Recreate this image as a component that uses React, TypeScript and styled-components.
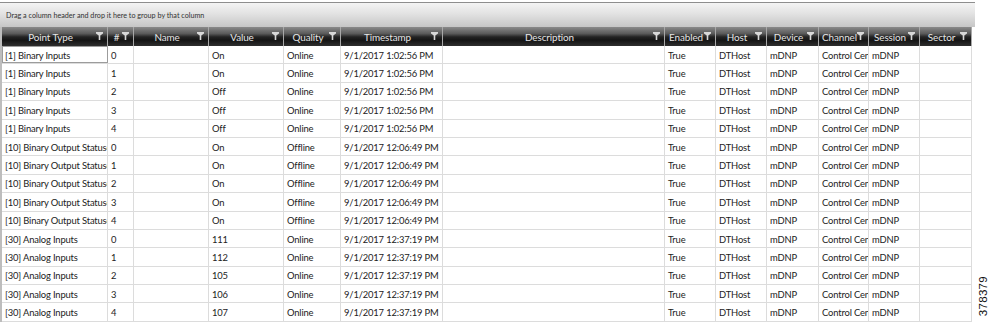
import React from 'react'
import styled, { createGlobalStyle } from 'styled-components'

const GlobalStyle = createGlobalStyle`
  html, body {
    margin: 0;
    padding: 0;
    background: #ffffff;
  }
  body {
    font-family: Lato, 'Noto Sans', sans-serif;
  }
`

type Column = { title: string; width: number }

const columns: Column[] = [
  { title: 'Point Type', width: 108 },
  { title: '#', width: 26 },
  { title: 'Name', width: 75 },
  { title: 'Value', width: 75 },
  { title: 'Quality', width: 57 },
  { title: 'Timestamp', width: 102 },
  { title: 'Description', width: 222 },
  { title: 'Enabled', width: 51 },
  { title: 'Host', width: 51 },
  { title: 'Device', width: 52 },
  { title: 'Channel', width: 50 },
  { title: 'Session', width: 51 },
  { title: 'Sector', width: 52 },
]

const makeRows = () => {
  const rows: string[][] = []
  const online = '9/1/2017 1:02:56 PM'
  const offline = '9/1/2017 12:06:49 PM'
  const analog = '9/1/2017 12:37:19 PM'
  const binVals = ['On', 'On', 'Off', 'Off', 'Off']
  for (let i = 0; i < 5; i++)
    rows.push(['[1] Binary Inputs', String(i), '', binVals[i], 'Online', online, '', 'True', 'DTHost', 'mDNP', 'Control Center', 'mDNP', ''])
  for (let i = 0; i < 5; i++)
    rows.push(['[10] Binary Output Statuses', String(i), '', 'On', 'Offline', offline, '', 'True', 'DTHost', 'mDNP', 'Control Center', 'mDNP', ''])
  const anVals = ['111', '112', '105', '106', '107']
  for (let i = 0; i < 5; i++)
    rows.push(['[30] Analog Inputs', String(i), '', anVals[i], 'Online', analog, '', 'True', 'DTHost', 'mDNP', 'Control Center', 'mDNP', ''])
  return rows
}

const rows = makeRows()

const Page = styled.div`
  display: flex;
  width: 991px;
  height: 326px;
  overflow: hidden;
`

const Grid = styled.div`
  display: flex;
  flex-direction: column;
  width: 975px;
  padding-top: 2px;
`

const GroupPanel = styled.div`
  display: flex;
  align-items: center;
  height: 24px;
  padding-left: 6px;
  border-top: 1px solid #8e8e8e;
  background: linear-gradient(#f4f4f4 0%, #e2e2e2 45%, #c6c6c6 100%);
  font-size: 7.2px;
  color: #333;
`

const Table = styled.div`
  display: flex;
  flex-direction: column;
  width: 972px;
  border-left: 2px solid #bdbdbd;
  box-sizing: border-box;
`

const HeaderRow = styled.div`
  display: flex;
  height: 19px;
  background: linear-gradient(#8a8a8a 0%, #5a5a5a 35%, #242424 52%, #141414 70%, #2e2e2e 100%);
`

const HeaderCell = styled.div<{ $w: number }>`
  position: relative;
  display: flex;
  align-items: center;
  justify-content: center;
  width: ${p => p.$w}px;
  flex: none;
  box-sizing: border-box;
  border-right: 1px solid #a8a8a8;
  padding: 1px 10px 0 2px;
  font-size: 9.9px;
  letter-spacing: -0.1px;
  color: #e6e6e6;
  white-space: nowrap;
  overflow: hidden;
`

const FilterIcon = styled.svg`
  position: absolute;
  right: 4px;
  top: 5px;
  width: 7px;
  height: 8px;
`

const Row = styled.div`
  display: flex;
  height: 18.4px;
  box-sizing: border-box;
  border-bottom: 1px solid #dcdcdc;
`

const Cell = styled.div<{ $w: number; $current?: boolean }>`
  display: flex;
  align-items: center;
  width: ${p => p.$w}px;
  flex: none;
  box-sizing: border-box;
  padding: 1px 0 0 3px;
  border-right: 1px solid #dcdcdc;
  font-size: 9.4px;
  letter-spacing: -0.15px;
  color: #222;
  white-space: nowrap;
  overflow: hidden;
  ${p => p.$current && 'border: 1px solid #9c9c9c; padding-left: 2px;'}
`

const Side = styled.div`
  display: flex;
  align-items: flex-end;
  justify-content: center;
  flex: 1;
  padding-bottom: 10px;
`

const FigureId = styled.div`
  writing-mode: vertical-rl;
  transform: rotate(180deg);
  font-family: 'Liberation Sans', Arial, sans-serif;
  font-size: 11.5px;
  color: #111;
  letter-spacing: 0.3px;
`

const Filter = () => (
  <FilterIcon viewBox="0 0 7 8">
    <path d="M0 0 H7 V1.6 L4.3 3.6 V8 H2.7 V3.6 L0 1.6 Z" fill="#d8d8d8" />
  </FilterIcon>
)

export default function App() {
  return (
    <Page>
      <GlobalStyle />
      <Grid>
        <GroupPanel>Drag a column header and drop it here to group by that column</GroupPanel>
        <Table>
          <HeaderRow>
            {columns.map(c => (
              <HeaderCell key={c.title} $w={c.title === 'Point Type' ? c.width - 2 : c.width}>
                {c.title}
                <Filter />
              </HeaderCell>
            ))}
          </HeaderRow>
          {rows.map((r, ri) => (
            <Row key={ri}>
              {columns.map((c, ci) => (
                <Cell
                  key={ci}
                  $w={ci === 0 ? c.width - 2 : c.width}
                  $current={ri === 0 && ci === 0}
                >
                  {r[ci]}
                </Cell>
              ))}
            </Row>
          ))}
        </Table>
      </Grid>
      <Side>
        <FigureId>378379</FigureId>
      </Side>
    </Page>
  )
}
